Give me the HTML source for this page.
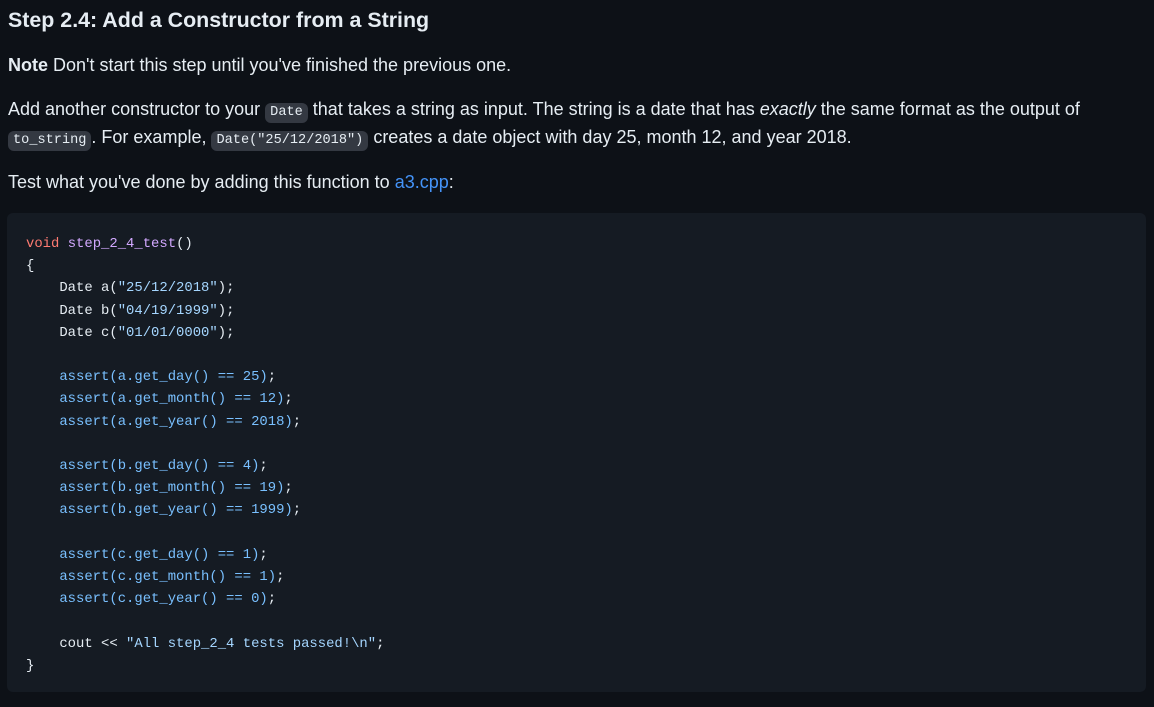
<!DOCTYPE html>
<html><head><style>
body{margin:0;background:#0d1117;color:#e6edf3;font-family:"Liberation Sans",sans-serif;width:1154px;height:707px;overflow:hidden}
h3{font-size:21.4px;font-weight:600;margin:0;position:absolute;top:8px;left:8px}
p{font-size:18px;line-height:28px;margin:0;position:absolute;left:8px;white-space:nowrap}
code{font-family:"Liberation Mono",monospace;font-size:13.6px;line-height:1;background:#343942;border-radius:6px;padding:3px 5px;display:inline-block}
a{color:#4493f8;text-decoration:none}
pre{position:absolute;left:7px;top:213px;width:1139px;height:479px;margin:0;background:#151b23;border-radius:6px;box-sizing:border-box;padding:20px 19px;font-family:"Liberation Mono",monospace;font-size:13.9px;line-height:22.2px;color:#e6edf3}
.k{color:#ff7b72}.f{color:#d2a8ff}.s{color:#a5d6ff}.c{color:#79c0ff}
</style></head><body>
<h3>Step 2.4: Add a Constructor from a String</h3>
<p style="top:51px"><b>Note</b> Don't start this step until you've finished the previous one.</p>
<p style="top:95px">Add another constructor to your <code>Date</code> that takes a string as input. The string is a date that has <i>exactly</i> the same format as the output of<br><code>to_string</code>. For example, <code>Date("25/12/2018")</code> creates a date object with day 25, month 12, and year 2018.</p>
<p style="top:168px">Test what you've done by adding this function to <a>a3.cpp</a>:</p>
<pre><span class="k">void</span> <span class="f">step_2_4_test</span>()
{
    Date a(<span class="s">"25/12/2018"</span>);
    Date b(<span class="s">"04/19/1999"</span>);
    Date c(<span class="s">"01/01/0000"</span>);

    <span class="c">assert(a.get_day() == 25)</span>;
    <span class="c">assert(a.get_month() == 12)</span>;
    <span class="c">assert(a.get_year() == 2018)</span>;

    <span class="c">assert(b.get_day() == 4)</span>;
    <span class="c">assert(b.get_month() == 19)</span>;
    <span class="c">assert(b.get_year() == 1999)</span>;

    <span class="c">assert(c.get_day() == 1)</span>;
    <span class="c">assert(c.get_month() == 1)</span>;
    <span class="c">assert(c.get_year() == 0)</span>;

    cout &lt;&lt; <span class="s">"All step_2_4 tests passed!\n"</span>;
}</pre>
</body></html>
